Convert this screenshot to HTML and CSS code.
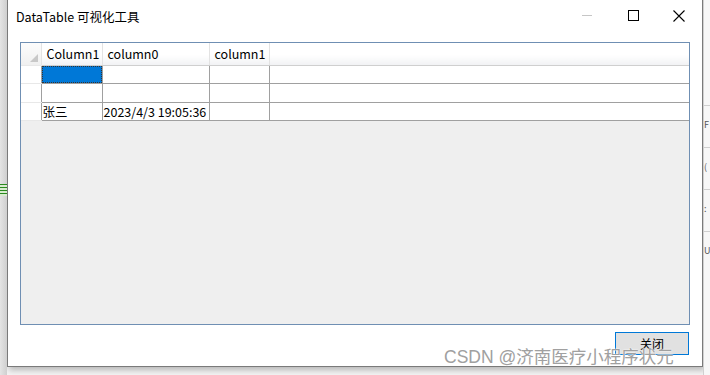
FILE: index.html
```html
<!DOCTYPE html>
<html>
  <head>
    <title>DataTable 可视化工具</title>
    <link rel="stylesheet" href="styles.css">
  </head>
  <body>
    <div class="desk">
      <!--왼쪽 배경 조각-->
      <div class="side-left">
        <span class="green-icon"></span>
      </div>
      <div class="win">
        <div class="titlebar">
          <span class="title">DataTable 可视化工具</span>
          <span class="caps">
            <span class="cap"><span class="min"></span></span>
            <span class="cap"><span class="max"></span></span>
            <span class="cap">
              <svg width="12" height="12" viewBox="0 0 12 12"><path d="M0.5 0.5 L11.5 11.5 M11.5 0.5 L0.5 11.5" stroke="#000" stroke-width="1.1" fill="none"/></svg>
            </span>
          </span>
        </div>
        <div class="client">
          <div class="grid">
            <table class="dgv">
              <colgroup>
                <col class="w-rh">
                <col class="w-c1">
                <col class="w-c2">
                <col class="w-c3">
                <col>
              </colgroup>
              <tr class="head">
                <td class="rh corner"><span class="tri"></span></td>
                <td>Column1</td>
                <td>column0</td>
                <td>column1</td>
                <td class="fill"></td>
              </tr>
              <tr>
                <td class="rh"></td>
                <td class="sel"><span class="focus"></span></td>
                <td></td>
                <td></td>
                <td class="fill"></td>
              </tr>
              <tr class="r2">
                <td class="rh"></td>
                <td></td>
                <td></td>
                <td></td>
                <td class="fill"></td>
              </tr>
              <tr>
                <td class="rh"></td>
                <td>张三</td>
                <td>2023/4/3 19:05:36</td>
                <td></td>
                <td class="fill"></td>
              </tr>
            </table>
          </div>
          <div class="foot">
            <a href="#" class="btn">关闭</a>
          </div>
        </div>
      </div>
      <!--오른쪽 배경 조각-->
      <div class="side-right">
        <div class="ln">F</div>
        <div class="ln">(</div>
        <div class="ln">:</div>
        <div class="ln">U</div>
      </div>
    </div>
    <div class="mark">CSDN @济南医疗小程序状元</div>
  </body>
</html>
```

FILE: styles.css
```css
body {
  margin: 0;
  width: 710px;
  height: 375px;
  overflow: hidden;
  background: #f3f3f3;
  font-family: "Microsoft YaHei", "Noto Sans CJK SC", sans-serif;
  font-size: 12px;
  color: #000;
}
.desk {
  display: flex;
  height: 375px;
}
.side-left {
  width: 7px;
  background: linear-gradient(to right, #e4e4e4, #cfcfcf);
  position: relative;
}
.green-icon {
  position: absolute;
  left: 0;
  top: 184px;
  width: 7px;
  height: 12px;
  background: repeating-linear-gradient(to bottom, #2a8a1e 0 1px, #d8ecd0 1px 3px);
}
.win {
  width: 694px;
  height: 366px;
  background: #fff;
  border-left: 1px solid #7a7a7a;
  border-right: 1px solid #7a7a7a;
  border-bottom: 1px solid #7a7a7a;
  display: flex;
  flex-direction: column;
  box-shadow: 2px 3px 6px rgba(0, 0, 0, 0.25);
}
.titlebar {
  height: 31px;
  display: flex;
  align-items: center;
  justify-content: space-between;
  padding-left: 8px;
}
.title {
  font-size: 12.5px;
  margin-top: 1px;
}
.caps {
  display: flex;
  height: 31px;
}
.cap {
  width: 46px;
  display: flex;
  align-items: center;
  justify-content: center;
}
.min {
  width: 10px;
  height: 1px;
  background: #c6c6c6;
}
.max {
  width: 9px;
  height: 9px;
  border: 1px solid #000;
}
.client {
  flex: 1;
  display: flex;
  flex-direction: column;
  padding: 11px 12px 0 12px;
}
.grid {
  height: 281px;
  border: 1px solid #6f8fb3;
  background: #efefef;
}
.dgv {
  border-collapse: collapse;
  width: 668px;
  table-layout: fixed;
  background: #fff;
  font-size: 12.5px;
}
.w-rh {
  width: 20px;
}
.w-c1 {
  width: 61px;
}
.w-c2 {
  width: 107px;
}
.w-c3 {
  width: 60px;
}
.dgv td {
  height: 17px;
  padding: 0 0 0 1px;
  border: 1px solid #a0a0a0;
  white-space: nowrap;
  overflow: hidden;
  line-height: 17px;
}
.dgv tr.r2 td {
  height: 18px;
}
.dgv tr:first-child td {
  border-top: none;
}
.dgv td:first-child {
  border-left: none;
}
.dgv td.fill {
  border-right: none;
}
.head td {
  height: 22px;
  background: linear-gradient(to bottom, #ffffff 55%, #f1f2f4);
  border-color: #e3e3e3;
  border-bottom: 1px solid #cfcfcf;
  padding-left: 5px;
  line-height: 20px;
}
.dgv td.rh {
  padding: 0;
  background: #fff;
  border-right: 1px solid #a0a0a0;
  border-top-color: #e8e8e8;
  border-bottom-color: #e8e8e8;
}
.head td.corner {
  border-right: 1px solid #e3e3e3;
  background: linear-gradient(to bottom, #fcfcfc, #f0f0f0);
  position: relative;
}
.tri {
  position: absolute;
  right: 3px;
  bottom: 3px;
  width: 0;
  height: 0;
  border-left: 8px solid transparent;
  border-bottom: 8px solid #c8c8c8;
}
.dgv td.sel {
  background: #0078d7;
  padding: 0;
  position: relative;
}
.focus {
  position: absolute;
  left: 0;
  top: 0;
  right: 0;
  bottom: 0;
  border: 1px dotted #333;
}
.foot {
  display: flex;
  justify-content: flex-end;
  padding-top: 7px;
  padding-right: 1px;
}
.btn {
  width: 72px;
  height: 21px;
  line-height: 21px;
  text-align: center;
  text-decoration: none;
  color: #000;
  background: #e1e1e1;
  border: 1px solid #0078d7;
}
.side-right {
  flex: 1;
  background: #f7f7f7;
  border-left: 1px solid #d0d0d0;
  padding-top: 105px;
  overflow: hidden;
}
.ln {
  height: 42px;
  border-top: 1px solid #cfcfcf;
  font-size: 9px;
  color: #555;
  padding-top: 12px;
  box-sizing: border-box;
}
.mark {
  position: absolute;
  left: 444px;
  top: 343px;
  font-family: "Liberation Sans", "Noto Sans CJK SC", sans-serif;
  font-size: 17.5px;
  color: #a0a0a0;
  text-shadow: 0 0 2px #fff, 0 0 1px #fff;
  white-space: nowrap;
}
```
